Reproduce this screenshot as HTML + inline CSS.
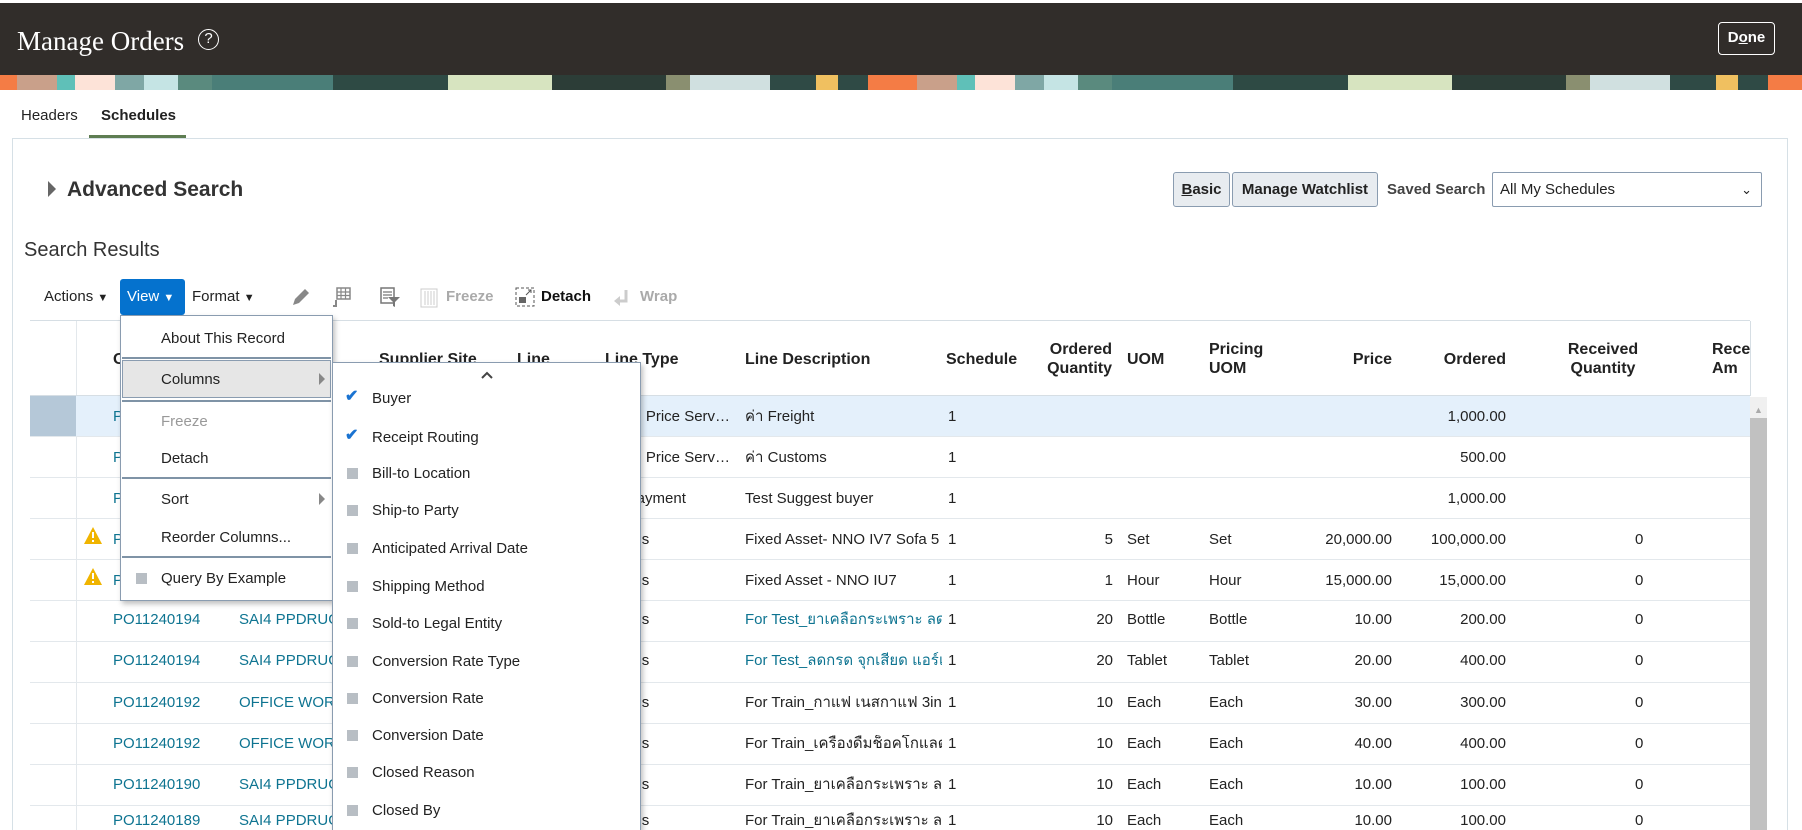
<!DOCTYPE html>
<html><head><meta charset="utf-8"><style>
*{margin:0;padding:0;box-sizing:border-box}
html{width:1802px;height:830px;overflow:hidden}
body{width:1802px;height:830px;overflow:hidden;background:#fff;font-family:"Liberation Sans","Noto Sans CJK SC",sans-serif;color:#222;position:relative;font-size:15px}
.a{position:absolute;white-space:nowrap;line-height:18px}
.hdr{position:absolute;left:0;top:3px;width:1802px;height:72px;background:#312d2a}
.ban{position:absolute;left:0;top:75px;width:1802px;height:15px;background:repeating-linear-gradient(90deg,#f47c45 0,#f47c45 17px,#c9a08a 17px,#c9a08a 57px,#5fc0b8 57px,#5fc0b8 75px,#fde3d8 75px,#fde3d8 115px,#7fa7a5 115px,#7fa7a5 144px,#c5e4e4 144px,#c5e4e4 178px,#5a8a7e 178px,#5a8a7e 212px,#4a7e78 212px,#4a7e78 333px,#2e4a44 333px,#2e4a44 448px,#d7e4c0 448px,#d7e4c0 552px,#2c3d37 552px,#2c3d37 666px,#8a8f70 666px,#8a8f70 690px,#d0e0e0 690px,#d0e0e0 770px,#2f4a45 770px,#2f4a45 816px,#f0c060 816px,#f0c060 838px,#2f4a45 838px,#2f4a45 868px,#f47c45 868px,#f47c45 900px)}
.lnk{color:#0e7491}
.th{font-weight:bold;font-size:16px;color:#222;line-height:19px}
.row{position:absolute;left:30px;width:1720px;height:41px;border-bottom:1px solid #e3e8ec}
.mi{position:absolute;left:161px;font-size:15px;color:#222;line-height:18px}
.sm{position:absolute;left:372px;font-size:15px;color:#222;line-height:18px}
.sq{position:absolute;left:347px;width:11px;height:11px;background:#b8bec4}
.ck{position:absolute;left:345px;color:#1a73d1;font-size:16px;font-weight:bold;line-height:18px}
.sep{position:absolute;left:122px;width:209px;height:2px;background:#7f93a6}
</style></head><body>
<div class="hdr"></div>
<div class="a" style="left:17px;top:26px;font-family:'Liberation Serif',serif;font-size:27px;line-height:30px;color:#fff">Manage Orders</div>
<div class="a" style="left:198px;top:29px;width:21px;height:21px;border:1.5px solid #fff;border-radius:50%;color:#fff;font-size:15px;text-align:center;line-height:18px">?</div>
<div class="a" style="left:1718px;top:22px;width:57px;height:33px;border:1.5px solid #fff;border-radius:4px;color:#fff;font-weight:bold;font-size:15px;text-align:center;line-height:30px">D<u>o</u>ne</div>
<div class="ban"></div>

<div class="a" style="left:21px;top:107px;font-size:15px">Headers</div>
<div class="a" style="left:101px;top:107px;font-size:15px;font-weight:bold">Schedules</div>
<div class="a" style="left:89px;top:135px;width:97px;height:3px;background:#5e7d52"></div>
<div class="a" style="left:12px;top:138px;width:1776px;height:692px;border:1px solid #d6e0e6;border-bottom:none"></div>

<div class="a" style="left:48px;top:181px;width:0;height:0;border-left:8px solid #666;border-top:8px solid transparent;border-bottom:8px solid transparent"></div>
<div class="a" style="left:67px;top:178px;font-size:21px;line-height:24px;font-weight:bold;color:#333">Advanced Search</div>
<div class="a" style="left:1173px;top:172px;width:57px;height:35px;border:1px solid #8a9cb0;border-radius:3px;background:#e8ecf0;font-weight:bold;font-size:15px;text-align:center;line-height:33px"><u>B</u>asic</div>
<div class="a" style="left:1232px;top:172px;width:146px;height:35px;border:1px solid #8a9cb0;border-radius:3px;background:#e8ecf0;font-weight:bold;font-size:15px;text-align:center;line-height:33px">Manage Watchlist</div>
<div class="a" style="left:1387px;top:181px;font-size:15px;font-weight:bold;color:#444">Saved Search</div>
<div class="a" style="left:1492px;top:172px;width:270px;height:35px;border:1px solid #8a9cb0;border-radius:2px;font-size:15px;line-height:33px;padding-left:7px">All My Schedules<span style="position:absolute;right:9px;top:0;font-size:13px">&#8964;</span></div>

<div class="a" style="left:24px;top:238px;font-size:20px;line-height:24px;color:#333">Search Results</div>

<div class="a" style="left:44px;top:288px;font-size:15px">Actions <span style="font-size:11px">&#9660;</span></div>
<div class="a" style="left:120px;top:279px;width:65px;height:36px;background:#0572ce;border-radius:3px;color:#fff;font-size:15px;line-height:36px;padding-left:7px">View <span style="font-size:11px">&#9660;</span></div>
<div class="a" style="left:192px;top:288px;font-size:15px">Format <span style="font-size:11px">&#9660;</span></div>
<svg class="a" style="left:290px;top:286px" width="20" height="22"><path d="M3 19 L5 13 L15 3 L19 7 L9 17 Z" fill="#888"/></svg>
<svg class="a" style="left:330px;top:286px" width="22" height="24"><rect x="7" y="2" width="13" height="11" fill="none" stroke="#888" stroke-width="1.5"/><path d="M7 6H20M7 9.5H20M11 2V13M15.5 2V13" stroke="#888" stroke-width="1.2"/><path d="M6 14V20H3" fill="none" stroke="#888" stroke-width="2"/></svg>
<svg class="a" style="left:379px;top:286px" width="22" height="22"><rect x="2" y="2" width="13" height="15" fill="none" stroke="#777" stroke-width="1.5"/><path d="M4 6H13M4 9H13M4 12H9" stroke="#777" stroke-width="1.3"/><path d="M9 11H21L16 16V21L14 20V16Z" fill="#777"/></svg>
<svg class="a" style="left:420px;top:288px" width="18" height="20"><rect x="1" y="1" width="16" height="18" fill="none" stroke="#ccc"/><path d="M5 3V17M8 3V17M11 3V17M14 3V17" stroke="#ccc"/></svg>
<div class="a" style="left:446px;top:288px;font-size:15px;font-weight:bold;color:#aaa">Freeze</div>
<svg class="a" style="left:515px;top:287px" width="20" height="20"><rect x="1" y="1" width="18" height="18" fill="none" stroke="#555" stroke-dasharray="3 2"/><rect x="4" y="10" width="7" height="6" fill="#666"/><path d="M11 8L16 3M13 3H16V6" stroke="#555" fill="none"/></svg>
<div class="a" style="left:541px;top:288px;font-size:15px;font-weight:bold;color:#111">Detach</div>
<svg class="a" style="left:613px;top:289px" width="18" height="18"><path d="M13 1V12H5" fill="none" stroke="#ccc" stroke-width="3"/><path d="M1 12L7 7V17Z" fill="#ccc"/></svg>
<div class="a" style="left:640px;top:288px;font-size:15px;font-weight:bold;color:#aaa">Wrap</div>

<!-- table -->
<div class="a" style="left:30px;top:320px;width:1720px;height:1px;background:#d6dee4"></div>
<div class="a" style="left:76px;top:321px;width:1px;height:509px;background:#e3e8ec"></div>
<div class="a" style="left:30px;top:395px;width:1720px;height:1px;background:#d6dee4"></div>
<div class="a th" style="left:113px;top:350px">Order</div>
<div class="a th" style="left:379px;top:350px">Supplier Site</div>
<div class="a th" style="left:517px;top:350px">Line</div>
<div class="a th" style="left:605px;top:350px">Line Type</div>
<div class="a th" style="left:745px;top:350px">Line Description</div>
<div class="a th" style="left:946px;top:350px">Schedule</div>
<div class="a th" style="left:1040px;top:340px;width:72px;text-align:right;white-space:normal">Ordered Quantity</div>
<div class="a th" style="left:1127px;top:350px">UOM</div>
<div class="a th" style="left:1209px;top:340px;white-space:normal;width:60px">Pricing UOM</div>
<div class="a th" style="left:1330px;top:350px;width:62px;text-align:right">Price</div>
<div class="a th" style="left:1420px;top:350px;width:86px;text-align:right">Ordered</div>
<div class="a th" style="left:1560px;top:340px;width:86px;text-align:center;white-space:normal">Received Quantity</div>
<div class="a th" style="left:1712px;top:340px;width:40px;overflow:hidden;white-space:normal">Rece Am</div>
<div class="a" style="left:1750px;top:321px;width:1px;height:75px;background:#d6dee4"></div>

<div class="row" style="top:396px;background:#e4f0fb"></div>
<div class="a" style="left:30px;top:396px;width:46px;height:40px;background:#b5c8d8"></div>
<div class="row" style="top:437px"></div>
<div class="row" style="top:478px"></div>
<div class="row" style="top:519px"></div>
<div class="row" style="top:560px"></div>
<div class="row" style="top:601px"></div>
<div class="row" style="top:642px"></div>
<div class="row" style="top:683px"></div>
<div class="row" style="top:724px"></div>
<div class="row" style="top:765px"></div>
<div class="row" style="top:806px;height:24px;border-bottom:none"></div>

<div class="a" style="left:1750px;top:397px;width:17px;height:433px;background:#f0f0f0"></div>
<div class="a" style="left:1750px;top:418px;width:17px;height:412px;background:#c1c1c1"></div>
<div class="a" style="left:1754px;top:401px;font-size:9px;color:#aaa">&#9650;</div>

<svg class="a" style="left:83px;top:526px" width="20" height="19"><path d="M10 1L19 18H1Z" fill="#f0b400"/><path d="M10 6V12M10 14V16" stroke="#fff" stroke-width="2"/></svg>
<svg class="a" style="left:83px;top:567px" width="20" height="19"><path d="M10 1L19 18H1Z" fill="#f0b400"/><path d="M10 6V12M10 14V16" stroke="#fff" stroke-width="2"/></svg>

<div class="a lnk" style="left:113px;top:408px">P</div>
<div class="a lnk" style="left:113px;top:449px">P</div>
<div class="a lnk" style="left:113px;top:490px">P</div>
<div class="a lnk" style="left:113px;top:531px">P</div>
<div class="a lnk" style="left:113px;top:572px">P</div>
<div class="a lnk" style="left:113px;top:611px">PO11240194</div><div class="a lnk" style="left:239px;top:611px">SAI4 PPDRUG</div>
<div class="a lnk" style="left:113px;top:652px">PO11240194</div><div class="a lnk" style="left:239px;top:652px">SAI4 PPDRUG</div>
<div class="a lnk" style="left:113px;top:694px">PO11240192</div><div class="a lnk" style="left:239px;top:694px">OFFICE WORK</div>
<div class="a lnk" style="left:113px;top:735px">PO11240192</div><div class="a lnk" style="left:239px;top:735px">OFFICE WORK</div>
<div class="a lnk" style="left:113px;top:776px">PO11240190</div><div class="a lnk" style="left:239px;top:776px">SAI4 PPDRUG</div>
<div class="a lnk" style="left:113px;top:812px">PO11240189</div><div class="a lnk" style="left:239px;top:812px">SAI4 PPDRUG</div>

<div class="a" style="left:605px;top:408px">Fixed Price Serv…</div>
<div class="a" style="left:605px;top:449px">Fixed Price Serv…</div>
<div class="a" style="left:605px;top:490px">Prepayment</div>
<div class="a" style="left:605px;top:531px">Goods</div><div class="a" style="left:605px;top:572px">Goods</div>
<div class="a" style="left:605px;top:611px">Goods</div><div class="a" style="left:605px;top:652px">Goods</div>
<div class="a" style="left:605px;top:694px">Goods</div><div class="a" style="left:605px;top:735px">Goods</div>
<div class="a" style="left:605px;top:776px">Goods</div><div class="a" style="left:605px;top:812px">Goods</div>

<div class="a" style="left:745px;top:408px">ค่า Freight</div>
<div class="a" style="left:745px;top:449px">ค่า Customs</div>
<div class="a" style="left:745px;top:490px">Test Suggest buyer</div>
<div class="a" style="left:745px;top:531px;width:197px;overflow:hidden">Fixed Asset- NNO IV7 Sofa 5</div>
<div class="a" style="left:745px;top:572px">Fixed Asset - NNO IU7</div>
<div class="a lnk" style="left:745px;top:611px;width:197px;overflow:hidden">For Test_ยาเคลือกระเพราะ ลดกรด</div>
<div class="a lnk" style="left:745px;top:652px;width:197px;overflow:hidden">For Test_ลดกรด จุกเสียด แอร์แมน</div>
<div class="a" style="left:745px;top:694px;width:197px;overflow:hidden">For Train_กาแฟ เนสกาแฟ 3in1</div>
<div class="a" style="left:745px;top:735px;width:197px;overflow:hidden">For Train_เครื่องดื่มช็อคโกแลต</div>
<div class="a" style="left:745px;top:776px;width:197px;overflow:hidden">For Train_ยาเคลือกระเพราะ ลด</div>
<div class="a" style="left:745px;top:812px;width:197px;overflow:hidden">For Train_ยาเคลือกระเพราะ ลด</div>

<div class="a" style="left:948px;top:408px">1</div><div class="a" style="left:948px;top:449px">1</div><div class="a" style="left:948px;top:490px">1</div><div class="a" style="left:948px;top:531px">1</div><div class="a" style="left:948px;top:572px">1</div><div class="a" style="left:948px;top:611px">1</div><div class="a" style="left:948px;top:652px">1</div><div class="a" style="left:948px;top:694px">1</div><div class="a" style="left:948px;top:735px">1</div><div class="a" style="left:948px;top:776px">1</div><div class="a" style="left:948px;top:812px">1</div>

<div class="a" style="left:1060px;top:531px;width:53px;text-align:right">5</div><div class="a" style="left:1127px;top:531px">Set</div><div class="a" style="left:1209px;top:531px">Set</div><div class="a" style="left:1290px;top:531px;width:102px;text-align:right">20,000.00</div><div class="a" style="left:1400px;top:531px;width:106px;text-align:right">100,000.00</div><div class="a" style="left:1635px;top:531px">0</div>
<div class="a" style="left:1060px;top:572px;width:53px;text-align:right">1</div><div class="a" style="left:1127px;top:572px">Hour</div><div class="a" style="left:1209px;top:572px">Hour</div><div class="a" style="left:1290px;top:572px;width:102px;text-align:right">15,000.00</div><div class="a" style="left:1400px;top:572px;width:106px;text-align:right">15,000.00</div><div class="a" style="left:1635px;top:572px">0</div>
<div class="a" style="left:1060px;top:611px;width:53px;text-align:right">20</div><div class="a" style="left:1127px;top:611px">Bottle</div><div class="a" style="left:1209px;top:611px">Bottle</div><div class="a" style="left:1290px;top:611px;width:102px;text-align:right">10.00</div><div class="a" style="left:1400px;top:611px;width:106px;text-align:right">200.00</div><div class="a" style="left:1635px;top:611px">0</div>
<div class="a" style="left:1060px;top:652px;width:53px;text-align:right">20</div><div class="a" style="left:1127px;top:652px">Tablet</div><div class="a" style="left:1209px;top:652px">Tablet</div><div class="a" style="left:1290px;top:652px;width:102px;text-align:right">20.00</div><div class="a" style="left:1400px;top:652px;width:106px;text-align:right">400.00</div><div class="a" style="left:1635px;top:652px">0</div>
<div class="a" style="left:1060px;top:694px;width:53px;text-align:right">10</div><div class="a" style="left:1127px;top:694px">Each</div><div class="a" style="left:1209px;top:694px">Each</div><div class="a" style="left:1290px;top:694px;width:102px;text-align:right">30.00</div><div class="a" style="left:1400px;top:694px;width:106px;text-align:right">300.00</div><div class="a" style="left:1635px;top:694px">0</div>
<div class="a" style="left:1060px;top:735px;width:53px;text-align:right">10</div><div class="a" style="left:1127px;top:735px">Each</div><div class="a" style="left:1209px;top:735px">Each</div><div class="a" style="left:1290px;top:735px;width:102px;text-align:right">40.00</div><div class="a" style="left:1400px;top:735px;width:106px;text-align:right">400.00</div><div class="a" style="left:1635px;top:735px">0</div>
<div class="a" style="left:1060px;top:776px;width:53px;text-align:right">10</div><div class="a" style="left:1127px;top:776px">Each</div><div class="a" style="left:1209px;top:776px">Each</div><div class="a" style="left:1290px;top:776px;width:102px;text-align:right">10.00</div><div class="a" style="left:1400px;top:776px;width:106px;text-align:right">100.00</div><div class="a" style="left:1635px;top:776px">0</div>
<div class="a" style="left:1060px;top:812px;width:53px;text-align:right">10</div><div class="a" style="left:1127px;top:812px">Each</div><div class="a" style="left:1209px;top:812px">Each</div><div class="a" style="left:1290px;top:812px;width:102px;text-align:right">10.00</div><div class="a" style="left:1400px;top:812px;width:106px;text-align:right">100.00</div><div class="a" style="left:1635px;top:812px">0</div>
<div class="a" style="left:1400px;top:408px;width:106px;text-align:right">1,000.00</div>
<div class="a" style="left:1400px;top:449px;width:106px;text-align:right">500.00</div>
<div class="a" style="left:1400px;top:490px;width:106px;text-align:right">1,000.00</div>

<!-- view menu -->
<div class="a" style="left:120px;top:315px;width:213px;height:286px;background:#fff;border:1px solid #8a9cb0;box-shadow:2px 3px 5px rgba(0,0,0,.25)"></div>
<div class="mi" style="top:330px">About This Record</div>
<div class="sep" style="top:357px"></div>
<div class="a" style="left:122px;top:360px;width:209px;height:38px;background:#e6e6e6;border:1px solid #8a9cb0"></div>
<div class="mi" style="top:371px">Columns</div>
<div class="a" style="left:319px;top:373px;width:0;height:0;border-left:6px solid #888;border-top:6px solid transparent;border-bottom:6px solid transparent"></div>
<div class="sep" style="top:400px"></div>
<div class="mi" style="top:413px;color:#999">Freeze</div>
<div class="mi" style="top:450px">Detach</div>
<div class="sep" style="top:477px"></div>
<div class="mi" style="top:491px">Sort</div>
<div class="a" style="left:319px;top:493px;width:0;height:0;border-left:6px solid #888;border-top:6px solid transparent;border-bottom:6px solid transparent"></div>
<div class="mi" style="top:529px">Reorder Columns...</div>
<div class="sep" style="top:556px"></div>
<div class="a" style="left:136px;top:573px;width:11px;height:11px;background:#b8bec4"></div>
<div class="mi" style="top:570px">Query By Example</div>

<!-- submenu -->
<div class="a" style="left:332px;top:362px;width:309px;height:468px;background:#fff;border:1px solid #8a9cb0;border-bottom:none;box-shadow:2px 3px 5px rgba(0,0,0,.25)"></div>
<svg class="a" style="left:481px;top:371px" width="12" height="8"><path d="M1 7L6 2L11 7" fill="none" stroke="#444" stroke-width="2"/></svg>
<div class="ck" style="top:388px">&#10004;</div><div class="sm" style="top:390px">Buyer</div>
<div class="ck" style="top:427px">&#10004;</div><div class="sm" style="top:429px">Receipt Routing</div>
<div class="sq" style="top:468px"></div><div class="sm" style="top:465px">Bill-to Location</div>
<div class="sq" style="top:505px"></div><div class="sm" style="top:502px">Ship-to Party</div>
<div class="sq" style="top:543px"></div><div class="sm" style="top:540px">Anticipated Arrival Date</div>
<div class="sq" style="top:581px"></div><div class="sm" style="top:578px">Shipping Method</div>
<div class="sq" style="top:618px"></div><div class="sm" style="top:615px">Sold-to Legal Entity</div>
<div class="sq" style="top:656px"></div><div class="sm" style="top:653px">Conversion Rate Type</div>
<div class="sq" style="top:693px"></div><div class="sm" style="top:690px">Conversion Rate</div>
<div class="sq" style="top:730px"></div><div class="sm" style="top:727px">Conversion Date</div>
<div class="sq" style="top:767px"></div><div class="sm" style="top:764px">Closed Reason</div>
<div class="sq" style="top:805px"></div><div class="sm" style="top:802px">Closed By</div>
</body></html>
